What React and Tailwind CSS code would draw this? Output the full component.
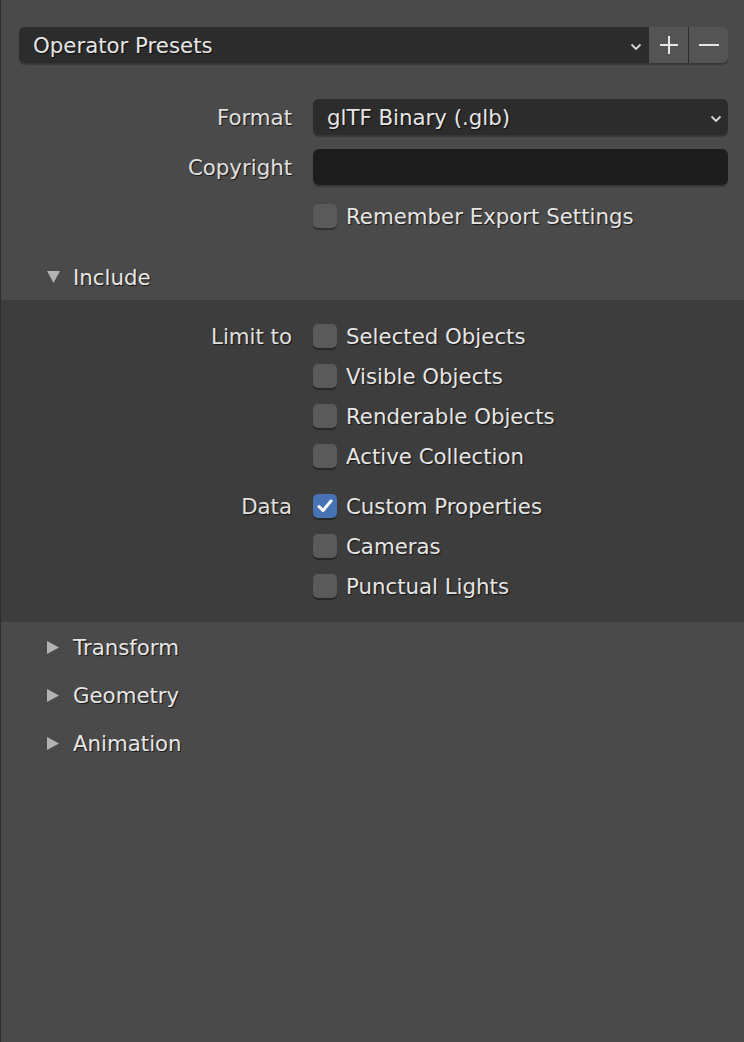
import React from 'react';

const shadow = '[text-shadow:1px_1px_1px_rgba(0,0,0,0.7)] pt-[2px]';

const Chevron = () => (
  <svg width="12" height="8" viewBox="0 0 12 8" className="shrink-0 mt-[3px]">
    <path d="M1.5 1.5 L6 6 L10.5 1.5" stroke="#d8d8d8" strokeWidth="1.8" fill="none" />
  </svg>
);

const Checkbox = ({ checked }) => (
  <div
    className={`w-[24px] h-[24px] rounded-[5px] shrink-0 flex items-center justify-center shadow-[0_2px_1px_rgba(0,0,0,0.35)] ${
      checked ? 'bg-[#4772b3]' : 'bg-[#5a5a5a]'
    }`}
  >
    {checked && (
      <svg width="20" height="20" viewBox="0 0 20 20">
        <path d="M4 10.5 L8 14.5 L16 5" stroke="#ffffff" strokeWidth="3" fill="none" strokeLinecap="round" strokeLinejoin="round" />
      </svg>
    )}
  </div>
);

const CheckRow = ({ label, text, checked, className = '' }) => (
  <div className={`grid grid-cols-[291px_1fr] gap-x-[21px] h-[40px] items-center ${className}`}>
    <div className={`text-right text-[#e0e0e0] ${shadow}`}>{label}</div>
    <div className="flex items-center gap-[9px]">
      <Checkbox checked={checked} />
      <span className={`text-[#e6e6e6] ${shadow}`}>{text}</span>
    </div>
  </div>
);

const SubPanel = ({ title, open }) => (
  <div className={`flex items-center pl-[46px] ${open ? 'h-[46px]' : 'h-[48px]'}`}>
    <div className="w-[26px]">
      {open ? (
        <svg width="13" height="12" viewBox="0 0 13 12">
          <path d="M0 0 L13 0 L6.5 12 Z" fill="#b3b3b3" />
        </svg>
      ) : (
        <svg width="12" height="13" viewBox="0 0 12 13">
          <path d="M0 0 L12 6.5 L0 13 Z" fill="#b3b3b3" />
        </svg>
      )}
    </div>
    <span className={`text-[#e6e6e6] ${shadow}`}>{title}</span>
  </div>
);

export default function App() {
  return (
    <div className="w-[744px] h-[1042px] bg-[#4a4a4a] border-l border-[#2e2e2e] text-[21.3px] font-['DejaVu_Sans',sans-serif] overflow-hidden">
      <div className="pt-[27px] pl-[18px] pr-[16px]">
        <div className="flex h-[36px] shadow-[0_2px_1px_rgba(0,0,0,0.25)] rounded-md">
          <div className="flex-1 flex items-center justify-between bg-[#2c2c2c] rounded-l-md pl-[14px] pr-[6px]">
            <span className={`text-[#e6e6e6] ${shadow}`}>Operator Presets</span>
            <Chevron />
          </div>
          <div className="w-[40px] bg-[#545454] border-l border-[#2c2c2c] flex items-center justify-center">
            <svg width="20" height="20" viewBox="0 0 20 20">
              <path d="M10 1 V19 M1 10 H19" stroke="#e6e6e6" strokeWidth="2" />
            </svg>
          </div>
          <div className="w-[40px] bg-[#545454] border-l border-[#2c2c2c] rounded-r-md flex items-center justify-center">
            <svg width="22" height="20" viewBox="0 0 22 20">
              <path d="M1 10 H21" stroke="#e6e6e6" strokeWidth="2" />
            </svg>
          </div>
        </div>
      </div>

      <div className="pr-[16px] pt-[36px]">
        <div className="grid grid-cols-[291px_1fr] gap-x-[21px] items-center h-[36px]">
          <div className={`text-right text-[#e0e0e0] ${shadow}`}>Format</div>
          <div className="h-[36px] bg-[#2c2c2c] rounded-md flex items-center justify-between pl-[14px] pr-[6px] shadow-[0_2px_1px_rgba(0,0,0,0.25)]">
            <span className={`text-[#e6e6e6] ${shadow}`}>glTF Binary (.glb)</span>
            <Chevron />
          </div>
        </div>
        <div className="grid grid-cols-[291px_1fr] gap-x-[21px] items-center h-[36px] mt-[14px]">
          <div className={`text-right text-[#e0e0e0] ${shadow}`}>Copyright</div>
          <div className="h-[36px] bg-[#1d1d1d] rounded-md shadow-[0_2px_1px_rgba(0,0,0,0.25)]" />
        </div>
        <CheckRow label="" text="Remember Export Settings" className="mt-[11px]" />
      </div>

      <div className="mt-[18px]">
        <SubPanel title="Include" open />
      </div>

      <div className="bg-[#3d3d3d] pt-[16px] pb-[16px] pr-[16px]">
        <CheckRow label="Limit to" text="Selected Objects" />
        <CheckRow label="" text="Visible Objects" />
        <CheckRow label="" text="Renderable Objects" />
        <CheckRow label="" text="Active Collection" />
        <CheckRow label="Data" text="Custom Properties" checked className="mt-[10px]" />
        <CheckRow label="" text="Cameras" />
        <CheckRow label="" text="Punctual Lights" />
      </div>

      <div className="pt-[1px]">
        <SubPanel title="Transform" />
        <SubPanel title="Geometry" />
        <SubPanel title="Animation" />
      </div>
    </div>
  );
}
